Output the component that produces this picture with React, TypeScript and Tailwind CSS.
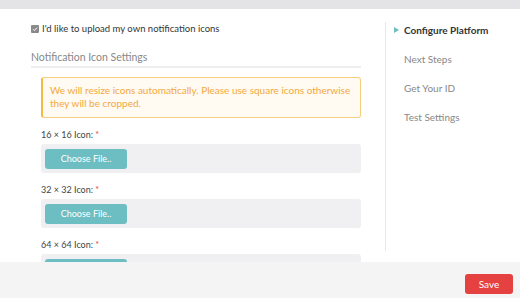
import React from "react";

const font = { fontFamily: "Lato, 'Open Sans', sans-serif" };

function FileField({ label }: { label: string }) {
  return (
    <div className="flex flex-col shrink-0">
      <div className="h-[14px] leading-[14px] text-[9px] text-[#444] mt-[10px] shrink-0">
        {label} <span className="text-[#e53e3e]">*</span>
      </div>
      <div className="mt-[2px] h-[29px] w-[320px] shrink-0 rounded-[3px] bg-[#f0f0f2] flex items-center pl-[4px]">
        <div className="h-[20px] w-[82px] rounded-[3px] bg-[#6cbec2] text-white text-[9px] flex items-center justify-center">
          Choose File..
        </div>
      </div>
    </div>
  );
}

export default function App() {
  const items = ["Configure Platform", "Next Steps", "Get Your ID", "Test Settings"];
  return (
    <div className="w-[520px] h-[298px] bg-white flex flex-col overflow-hidden" style={font}>
      <div className="h-[9px] bg-[#e4e4e6] shrink-0" />
      <div className="h-[253px] flex overflow-hidden shrink-0">
        <div className="w-[354px] pl-[31px] flex flex-col shrink-0">
          <div className="mt-[14px] h-[12px] flex items-center gap-[3px] shrink-0">
            <span className="w-[8px] h-[8px] rounded-[1px] bg-[#8a8a8a] flex items-center justify-center">
              <svg width="6" height="6" viewBox="0 0 6 6">
                <path d="M1 3.2 L2.4 4.6 L5 1.6" stroke="white" strokeWidth="1" fill="none" />
              </svg>
            </span>
            <span className="text-[9.5px] text-[#333]">I'd like to upload my own notification icons</span>
          </div>
          <div className="mt-[15px] h-[14px] leading-[14px] text-[10.5px] text-[#888] shrink-0">
            Notification Icon Settings
          </div>
          <div className="mt-[2px] h-[2px] w-[330px] bg-[#eeeeee] shrink-0" />
          <div className="ml-[10px] mt-[9px] w-[320px] h-[41px] shrink-0 rounded-[3px] border border-[#f8cf80] border-l-2 border-l-[#f5b942] bg-[#fffaf2] px-[7px] pt-[6px] text-[10px] leading-[13px] text-[#f3a93a]">
            We will resize icons automatically. Please use square icons otherwise they will be cropped.
          </div>
          <div className="ml-[10px] flex flex-col shrink-0">
            <FileField label="16 × 16 Icon:" />
            <FileField label="32 × 32 Icon:" />
            <FileField label="64 × 64 Icon:" />
          </div>
        </div>
        <div className="ml-[31px] mt-[13px] h-[229px] border-l border-[#e8e8e8] pl-[8px] flex flex-col gap-[13px]">
          {items.map((t, i) => (
            <div key={t} className="h-[16px] flex items-center shrink-0">
              <span className="w-[10px] flex items-center">
                {i === 0 && (
                  <svg width="5" height="6" viewBox="0 0 5 6">
                    <path d="M0 0 L5 3 L0 6 Z" fill="#6cbec2" />
                  </svg>
                )}
              </span>
              <span className={i === 0 ? "text-[10px] font-bold text-[#333]" : "text-[10px] text-[#888]"}>
                {t}
              </span>
            </div>
          ))}
        </div>
      </div>
      <div className="flex-1 bg-[#f4f4f5] flex items-start justify-end pr-[7px] pt-[12px]">
        <div className="w-[48px] h-[20px] rounded-[3px] bg-[#e54141] text-white text-[10px] flex items-center justify-center">
          Save
        </div>
      </div>
    </div>
  );
}
